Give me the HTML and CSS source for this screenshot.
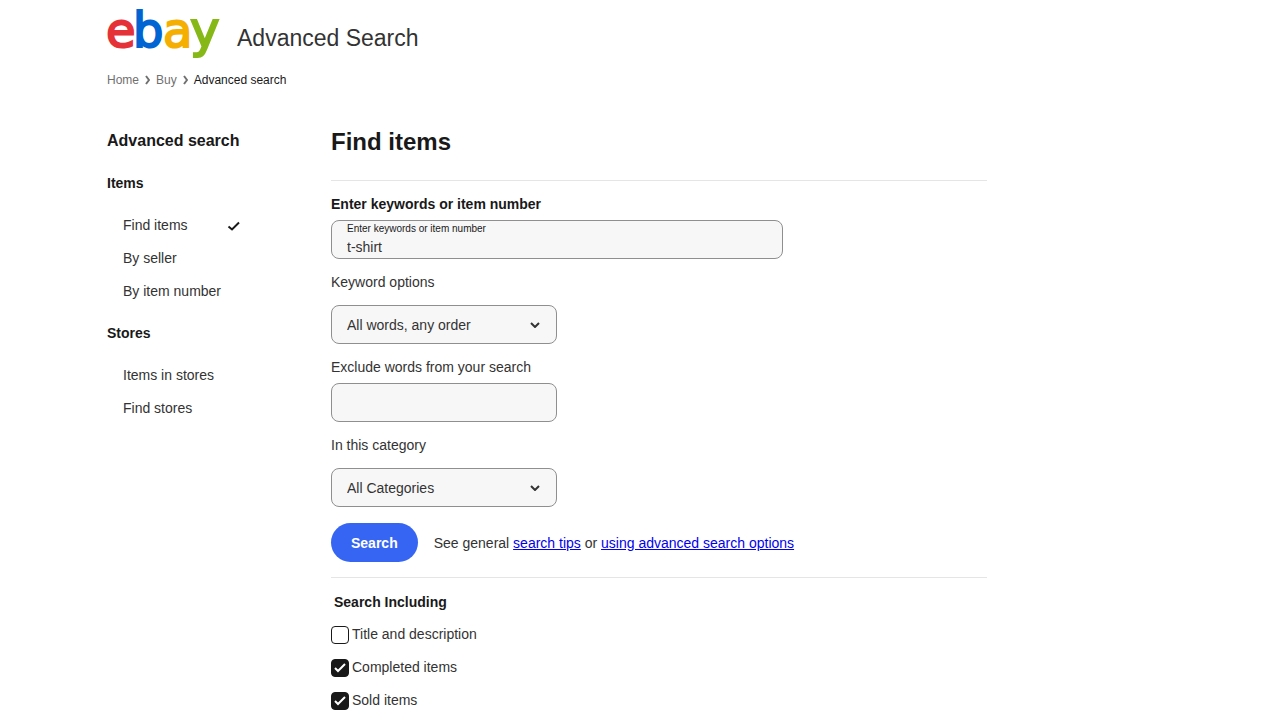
FILE: index.html
```html
<!DOCTYPE html>
<html lang="en">
<head>
<meta charset="utf-8">
<meta name="viewport" content="width=device-width, initial-scale=1">
<title>Advanced Search</title>
<link rel="stylesheet" href="styles.css">
</head>
<body>
<div class="page">
  <header class="header">
    <a class="logo" href="#" aria-label="ebay home">
      <svg width="116" height="50" viewBox="0 0 116 50" aria-hidden="true">
        <g class="logo-text">
          <text class="logo-e" x="-1" y="38">e</text>
          <text class="logo-a" x="56" y="38">a</text>
          <text class="logo-b" x="26" y="38">b</text>
          <text class="logo-y" x="83" y="38">y</text>
        </g>
      </svg>
    </a>
    <h1 class="title">Advanced Search</h1>
  </header>

  <nav class="crumbs" aria-label="Breadcrumb">
    <a href="#">Home</a>
    <svg class="crumb-sep" width="5" height="10" viewBox="0 0 5 10"><path d="M1 1l3 4-3 4"/></svg>
    <a href="#">Buy</a>
    <svg class="crumb-sep" width="5" height="10" viewBox="0 0 5 10"><path d="M1 1l3 4-3 4"/></svg>
    <span class="crumb-current">Advanced search</span>
  </nav>

  <div class="columns">
    <aside class="sidebar">
      <h2 class="side-title">Advanced search</h2>
      <h3 class="side-heading">Items</h3>
      <ul class="side-list">
        <li><a href="#">Find items</a>
          <svg width="14" height="10" viewBox="0 0 14 10"><path class="check" d="M1.5 5.5l3.5 3 7-7"/></svg></li>
        <li><a href="#">By seller</a></li>
        <li><a href="#">By item number</a></li>
      </ul>
      <h3 class="side-heading">Stores</h3>
      <ul class="side-list">
        <li><a href="#">Items in stores</a></li>
        <li><a href="#">Find stores</a></li>
      </ul>
    </aside>

    <main class="main">
      <h2 class="main-title">Find items</h2>
      <form class="form">
        <section class="section">
          <h3 class="label label-strong">Enter keywords or item number</h3>
          <div class="floating">
            <label class="floating-label" for="keywords">Enter keywords or item number</label>
            <input class="control control-floating" id="keywords" type="text" value="t-shirt">
          </div>

          <label class="label label-select" for="options">Keyword options</label>
          <div class="select">
            <select class="control" id="options"><option>All words, any order</option></select>
            <svg class="chevron" width="10" height="6" viewBox="0 0 10 6"><path d="M1 1l4 4 4-4"/></svg>
          </div>

          <label class="label" for="exclude">Exclude words from your search</label>
          <input class="control control-half" id="exclude" type="text">

          <label class="label label-select" for="category">In this category</label>
          <div class="select">
            <select class="control" id="category"><option>All Categories</option></select>
            <svg class="chevron" width="10" height="6" viewBox="0 0 10 6"><path d="M1 1l4 4 4-4"/></svg>
          </div>

          <div class="actions">
            <button class="search" type="button">Search</button>
            <p class="tips">See general <a href="#">search tips</a> or <a href="#">using advanced search options</a></p>
          </div>
        </section>

        <fieldset class="including">
          <legend>Search Including</legend>
          <label class="option"><input type="checkbox">Title and description</label>
          <label class="option"><span class="tick"><input type="checkbox" checked><svg width="14" height="12" viewBox="0 0 14 12"><path d="M2 6l3 3 7-7"/></svg></span>Completed items</label>
          <label class="option"><span class="tick"><input type="checkbox" checked><svg width="14" height="12" viewBox="0 0 14 12"><path d="M2 6l3 3 7-7"/></svg></span>Sold items</label>
        </fieldset>
      </form>
    </main>
  </div>
</div>
</body>
</html>
```
FILE: styles.css
```css
* { box-sizing: border-box; }

body {
  margin: 0;
  background: #fff;
  color: #333;
  font-family: "Liberation Sans", Arial, sans-serif;
  font-size: 14px;
  line-height: 20px;
}

h1, h2, h3, p, ul, fieldset { margin: 0; padding: 0; }
ul { list-style: none; }
svg { flex: none; fill: none; }

.page { padding: 9px 24px 0 107px; }

.header { display: flex; align-items: center; gap: 14px; }
.logo { display: flex; }
.logo svg { overflow: visible; }
.logo-text { font-family: "DejaVu Sans", sans-serif; font-size: 48px; stroke-width: 2px; }
.logo-e { fill: #e53238; stroke: #e53238; }
.logo-b { fill: #0064d2; stroke: #0064d2; }
.logo-a { fill: #f5af02; stroke: #f5af02; }
.logo-y { fill: #86b817; stroke: #86b817; font-size: 50px; }
.title { padding-top: 8px; font-size: 23px; font-weight: 400; line-height: 28px; }

.crumbs {
  display: flex;
  align-items: center;
  gap: 6px;
  margin-top: 11px;
  font-size: 12px;
}
.crumbs a { color: #707070; text-decoration: none; }
.crumb-current { color: #191919; }
.crumb-sep { stroke: #707070; stroke-width: 2; }

.columns {
  display: grid;
  grid-template-columns: 200px minmax(0, 656px);
  gap: 24px;
  margin-top: 38px;
}

.side-title { padding: 3px 0 22px; font-size: 16px; color: #191919; }
.side-heading { font-size: 14px; color: #191919; }
.side-list { padding: 16px 0 15px 16px; }
.side-list li { display: flex; align-items: center; gap: 39px; line-height: 33px; }
.side-list a { color: #333; text-decoration: none; }
.check { stroke: #191919; stroke-width: 2; }

.main-title {
  padding-bottom: 24px;
  border-bottom: 1px solid #e5e5e5;
  color: #191919;
  font-size: 24px;
  line-height: 28px;
}
.section { padding: 13px 0 15px; border-bottom: 1px solid #e5e5e5; }
.label { display: block; margin-bottom: 6px; }
.label-strong { color: #191919; font-size: 14px; }
.label-select { margin-bottom: 13px; }

.control {
  display: block;
  width: 100%;
  height: 39px;
  padding: 0 15px;
  border: 1px solid #8f8f8f;
  border-radius: 8px;
  background: #f7f7f7;
  color: #333;
  font: inherit;
  appearance: none;
}
.control-half, .select { width: 226px; max-width: 100%; margin-bottom: 13px; }
.floating, .select { position: relative; }
.floating { max-width: 452px; margin-bottom: 13px; }
.floating-label {
  position: absolute;
  top: 3px;
  left: 16px;
  font-size: 10px;
  line-height: 12px;
  color: #191919;
}
.control-floating { padding-top: 15px; }
.chevron {
  position: absolute;
  top: 17px;
  right: 17px;
  stroke: #333;
  stroke-width: 2;
  pointer-events: none;
}

.actions { display: flex; align-items: center; gap: 16px; padding-top: 3px; }
.search {
  height: 39px;
  padding: 0 20px;
  border: 0;
  border-radius: 20px;
  background: #3665f3;
  color: #fff;
  font: inherit;
  font-weight: 700;
}
.tips a { color: #0000ee; }

.including { border: 0; padding-top: 14px; }
.including legend { float: left; width: 100%; padding: 0 0 6px 3px; color: #191919; font-weight: 700; }
.option { display: flex; clear: both; align-items: center; gap: 3px; line-height: 33px; }
.option input {
  display: block;
  width: 18px;
  height: 18px;
  margin: 0;
  border: 1px solid #191919;
  border-radius: 4px;
  background: #fff;
  appearance: none;
}
.option input:checked { background: #191919; }
.tick { display: grid; place-items: center; }
.tick > * { grid-area: 1 / 1; }
.tick svg { stroke: #fff; stroke-width: 2; z-index: 1; }
```
